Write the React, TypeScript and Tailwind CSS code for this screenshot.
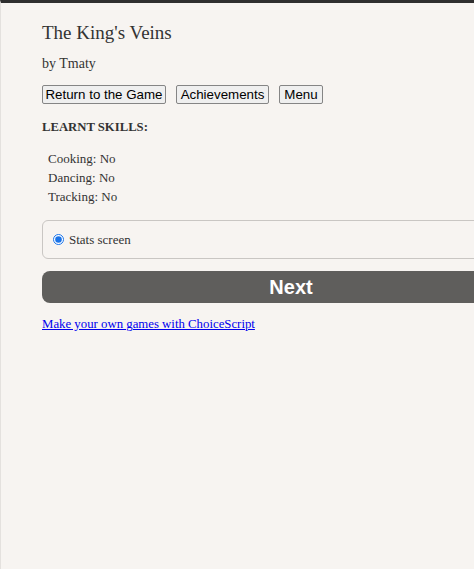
import React, { useState } from 'react';

const SKILLS = [
  { name: 'Cooking', value: 'No' },
  { name: 'Dancing', value: 'No' },
  { name: 'Tracking', value: 'No' },
];

const serif = "font-['Liberation_Serif',serif]";
const sans = "font-['Liberation_Sans',Arial,sans-serif]";

const topBtn =
  'h-[19px] px-0 text-[13.33px] leading-[15px] text-black bg-[#efefef] border border-[#858585] rounded-[2px]';

export default function App() {
  const [choice, setChoice] = useState('stats');

  return (
    <div className="w-[474px] h-[569px] overflow-hidden bg-[#f7f4f1] border-t-[3px] border-t-[#2f2f2f] border-l border-l-[#e4e1de]">
      <div className={`w-[498px] ml-[41px] pt-[17px] text-[#333] ${serif}`}>
        <h1 className="text-[19px] leading-[26px]">The King's Veins</h1>
        <p className="mt-[9px] text-[14px] leading-[18px]">by Tmaty</p>

        {/* Top buttons */}
        <div className={`flex gap-[10px] mt-[12px] ${sans}`}>
          <button className={`${topBtn} w-[124px]`}>Return to the Game</button>
          <button className={`${topBtn} w-[93px]`}>Achievements</button>
          <button className={`${topBtn} w-[44px]`}>Menu</button>
        </div>

        <h2 className="mt-[15px] text-[12.7px] leading-[16px] font-bold">LEARNT SKILLS:</h2>

        <div className="mt-[14px] ml-[6px] text-[13px] leading-[19px]">
          {SKILLS.map((s) => (
            <div key={s.name}>
              {s.name}: {s.value}
            </div>
          ))}
        </div>

        {/* Choice box */}
        <label className="mt-[14px] flex items-center h-[39px] px-[10px] border border-[#c9c6c3] rounded-[6px] text-[13px]">
          <input
            type="radio"
            name="choice"
            checked={choice === 'stats'}
            onChange={() => setChoice('stats')}
            className="w-[11px] h-[11px] mr-[5px] accent-[#1a73e8]"
          />
          Stats screen
        </label>

        <button
          className={`mt-[12px] w-full h-[32px] rounded-[8px] bg-[#5f5e5c] text-white text-[20px] font-bold ${sans}`}
        >
          Next
        </button>

        <p className="mt-[12px] text-[12.8px] leading-[18px]">
          <a href="#" className="text-[#0000ee] underline">
            Make your own games with ChoiceScript
          </a>
        </p>
      </div>
    </div>
  );
}
